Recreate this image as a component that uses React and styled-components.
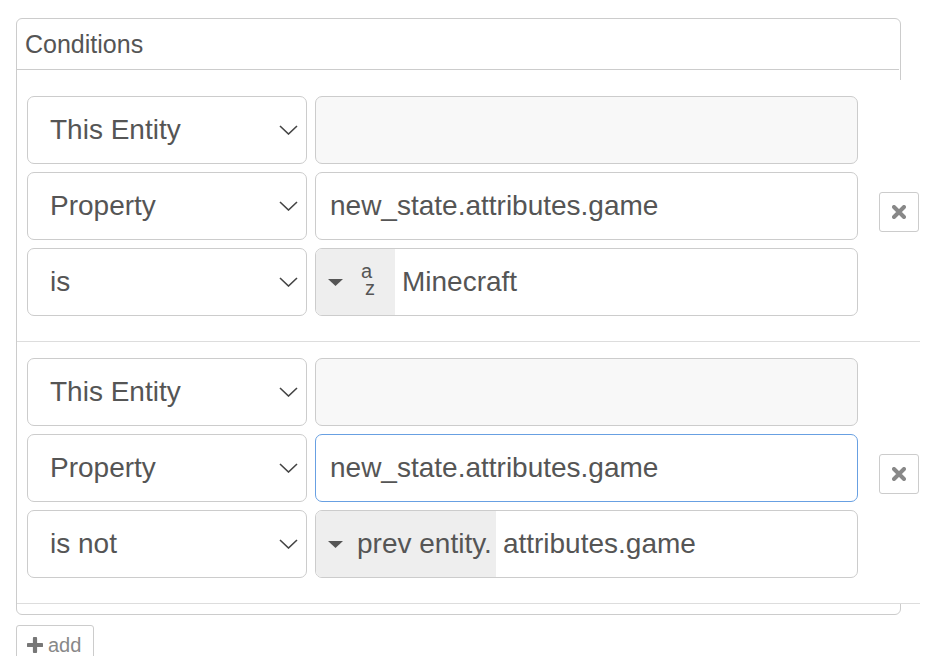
import React from "react";
import styled, { createGlobalStyle, css } from "styled-components";

const GlobalStyle = createGlobalStyle`
  html, body { margin: 0; padding: 0; background: #fff; }
  body { font-family: "Liberation Sans", Arial, Helvetica, sans-serif; color: #555; }
  * { box-sizing: border-box; }
`;

const Page = styled.div`
  width: 940px;
  height: 656px;
  overflow: hidden;
  padding: 18px 0 0 16px;
`;

const Panel = styled.div`
  width: 885px;
  border: 1px solid #ccc;
  border-radius: 6px;
  padding-bottom: 10px;
`;

const Header = styled.div`
  height: 51px;
  border-bottom: 1px solid #ccc;
  padding-left: 8px;
  margin-right: 1px;
  display: flex;
  align-items: center;
  font-size: 25px;
  color: #555;
`;

const List = styled.div`
  margin-top: 10px;
  margin-right: -20px;
  background: #fff;
`;

const Item = styled.div`
  display: flex;
  align-items: center;
  padding: 16px 1px 25px 10px;
  border-bottom: 1px solid #ddd;
`;

const Grid = styled.div`
  display: grid;
  grid-template-columns: 280px 543px;
  grid-auto-rows: 68px;
  column-gap: 8px;
  row-gap: 8px;
`;

const Select = styled.div`
  position: relative;
  display: flex;
  align-items: center;
  height: 68px;
  padding-left: 22px;
  border: 1px solid #ccc;
  border-radius: 7px;
  background: #fff;
  font-size: 28px;
  color: #555;
`;

const Chevron = styled.svg`
  position: absolute;
  right: 8px;
  top: 50%;
  margin-top: -5px;
`;

const Input = styled.div`
  display: flex;
  align-items: center;
  height: 68px;
  padding-left: 14px;
  border: 1px solid ${(p) => (p.$focused ? "rgb(104,160,226)" : "#ccc")};
  border-radius: 7px;
  background: ${(p) => (p.$disabled ? "#f8f8f8" : "#fff")};
  font-size: 28px;
  color: #555;
  ${(p) =>
    p.$typed &&
    css`
      padding-left: 0;
      overflow: hidden;
    `}
`;

const TypeButton = styled.div`
  display: flex;
  align-items: center;
  align-self: stretch;
  gap: 14px;
  padding: 0 4px 0 12px;
  background: #eee;
  color: #555;
  font-size: 28px;
`;

const TypedValue = styled.span`
  padding-left: 7px;
`;

const AzIcon = styled.span`
  position: relative;
  display: inline-block;
  width: 34px;
  height: 40px;
  font-size: 20px;
  color: #555;
`;

const AzLetter = styled.span`
  position: absolute;
  left: ${(p) => p.$left}px;
  top: ${(p) => p.$top}px;
  line-height: 14px;
`;

const DeleteButton = styled.button`
  width: 40px;
  height: 40px;
  margin-left: 21px;
  margin-top: 12px;
  padding: 0;
  border: 1px solid #ccc;
  border-radius: 3px;
  background: #fff;
  display: flex;
  align-items: center;
  justify-content: center;
`;

const AddButton = styled.button`
  margin-top: 10px;
  height: 40px;
  padding: 0 12px 0 10px;
  border: 1px solid #ccc;
  border-radius: 3px;
  background: #fff;
  display: flex;
  align-items: center;
  gap: 5px;
  font-family: "Liberation Sans", Arial, sans-serif;
  font-size: 20px;
  color: #888;
`;

const ChevronIcon = () => (
  <Chevron width="19" height="10" viewBox="0 0 19 10">
    <path d="M1 1 L9.5 9 L18 1" fill="none" stroke="#444" strokeWidth="1.6" />
  </Chevron>
);

const Caret = () => (
  <svg width="15" height="7" viewBox="0 0 15 7">
    <path d="M0 0 H15 L7.5 7 Z" fill="#555" />
  </svg>
);

const TimesIcon = () => (
  <svg width="14" height="14" viewBox="0 0 14 14">
    <path
      d="M2 2 L12 12 M12 2 L2 12"
      stroke="#888"
      strokeWidth="4"
      strokeLinecap="round"
    />
  </svg>
);

const PlusIcon = () => (
  <svg width="16" height="16" viewBox="0 0 16 16">
    <path d="M8 1.5 V14.5 M1.5 8 H14.5" stroke="#777" strokeWidth="4.2" strokeLinecap="round" />
  </svg>
);

const Condition = ({ op, value, focused, typed }) => (
  <Item>
    <Grid>
      <Select>
        This Entity
        <ChevronIcon />
      </Select>
      <Input $disabled />
      <Select>
        Property
        <ChevronIcon />
      </Select>
      <Input $focused={focused}>new_state.attributes.game</Input>
      <Select>
        {op}
        <ChevronIcon />
      </Select>
      <Input $typed>
        <TypeButton>
          <Caret />
          {typed === "str" ? (
            <AzIcon>
              <AzLetter $left={4} $top={2}>a</AzLetter>
              <AzLetter $left={8} $top={19}>z</AzLetter>
            </AzIcon>
          ) : (
            <span>prev entity.</span>
          )}
        </TypeButton>
        <TypedValue>{value}</TypedValue>
      </Input>
    </Grid>
    <DeleteButton>
      <TimesIcon />
    </DeleteButton>
  </Item>
);

export default function App() {
  return (
    <>
      <GlobalStyle />
      <Page>
        <Panel>
          <Header>Conditions</Header>
          <List>
            <Condition op="is" value="Minecraft" typed="str" />
            <Condition op="is not" value="attributes.game" typed="prev" focused />
          </List>
        </Panel>
        <AddButton>
          <PlusIcon />
          add
        </AddButton>
      </Page>
    </>
  );
}
